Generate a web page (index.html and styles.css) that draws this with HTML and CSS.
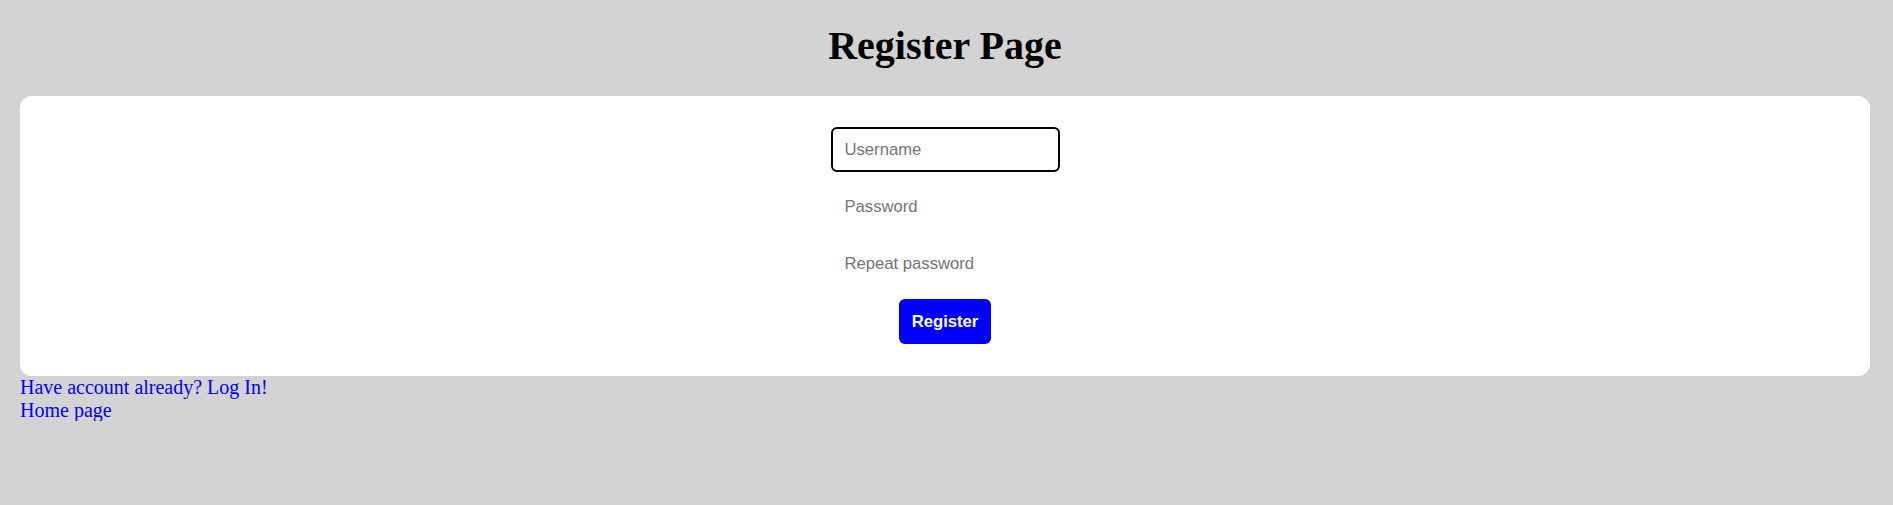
FILE: index.html
```html
<!DOCTYPE html>
<html lang="en">
<head>
<meta charset="utf-8">
<title>Register Page</title>
<link rel="stylesheet" href="styles.css">
</head>
<body>
<h1 class="title">Register Page</h1>
<form class="card">
  <input class="field field-focus" type="text" placeholder="Username">
  <input class="field" type="password" placeholder="Password">
  <input class="field" type="password" placeholder="Repeat password">
  <button class="btn" type="button">Register</button>
</form>
<div class="links">
  <a class="link" href="#">Have account already? Log In!</a>
  <a class="link" href="#">Home page</a>
</div>
</body>
</html>
```
FILE: styles.css
```css
html {
  background: #d3d3d3;
}
body {
  margin: 0 23px 0 20px;
  padding-top: 1px;
  font-family: "Liberation Serif", "Times New Roman", serif;
  font-size: 20px;
}
.title {
  margin: 22px 0 27px;
  font-size: 40px;
  font-weight: bold;
  text-align: center;
  color: #000;
  line-height: 46px;
}
.card {
  background: #fff;
  border-radius: 12px;
  padding: 31px 0 32px;
  display: flex;
  flex-direction: column;
  align-items: center;
  gap: 12px;
}
.field {
  box-sizing: border-box;
  width: 229px;
  height: 45px;
  padding: 0 12px;
  border: 2px solid transparent;
  border-radius: 6px;
  font-family: "Liberation Sans", Arial, sans-serif;
  font-size: 16.67px;
  color: #000;
  background: #fff;
  outline: none;
}
.field::placeholder {
  color: #757575;
}
.field-focus {
  border-color: #000;
}
.btn {
  margin-top: 1px;
  box-sizing: border-box;
  width: 92px;
  height: 45px;
  border: none;
  border-radius: 6px;
  background: #0000ff;
  color: #fff;
  font-family: "Liberation Sans", Arial, sans-serif;
  font-size: 16.67px;
  font-weight: bold;
}
.links {
  display: flex;
  flex-direction: column;
  line-height: 22.5px;
}
.link {
  color: #0000ff;
  text-decoration: none;
  align-self: flex-start;
}
```
